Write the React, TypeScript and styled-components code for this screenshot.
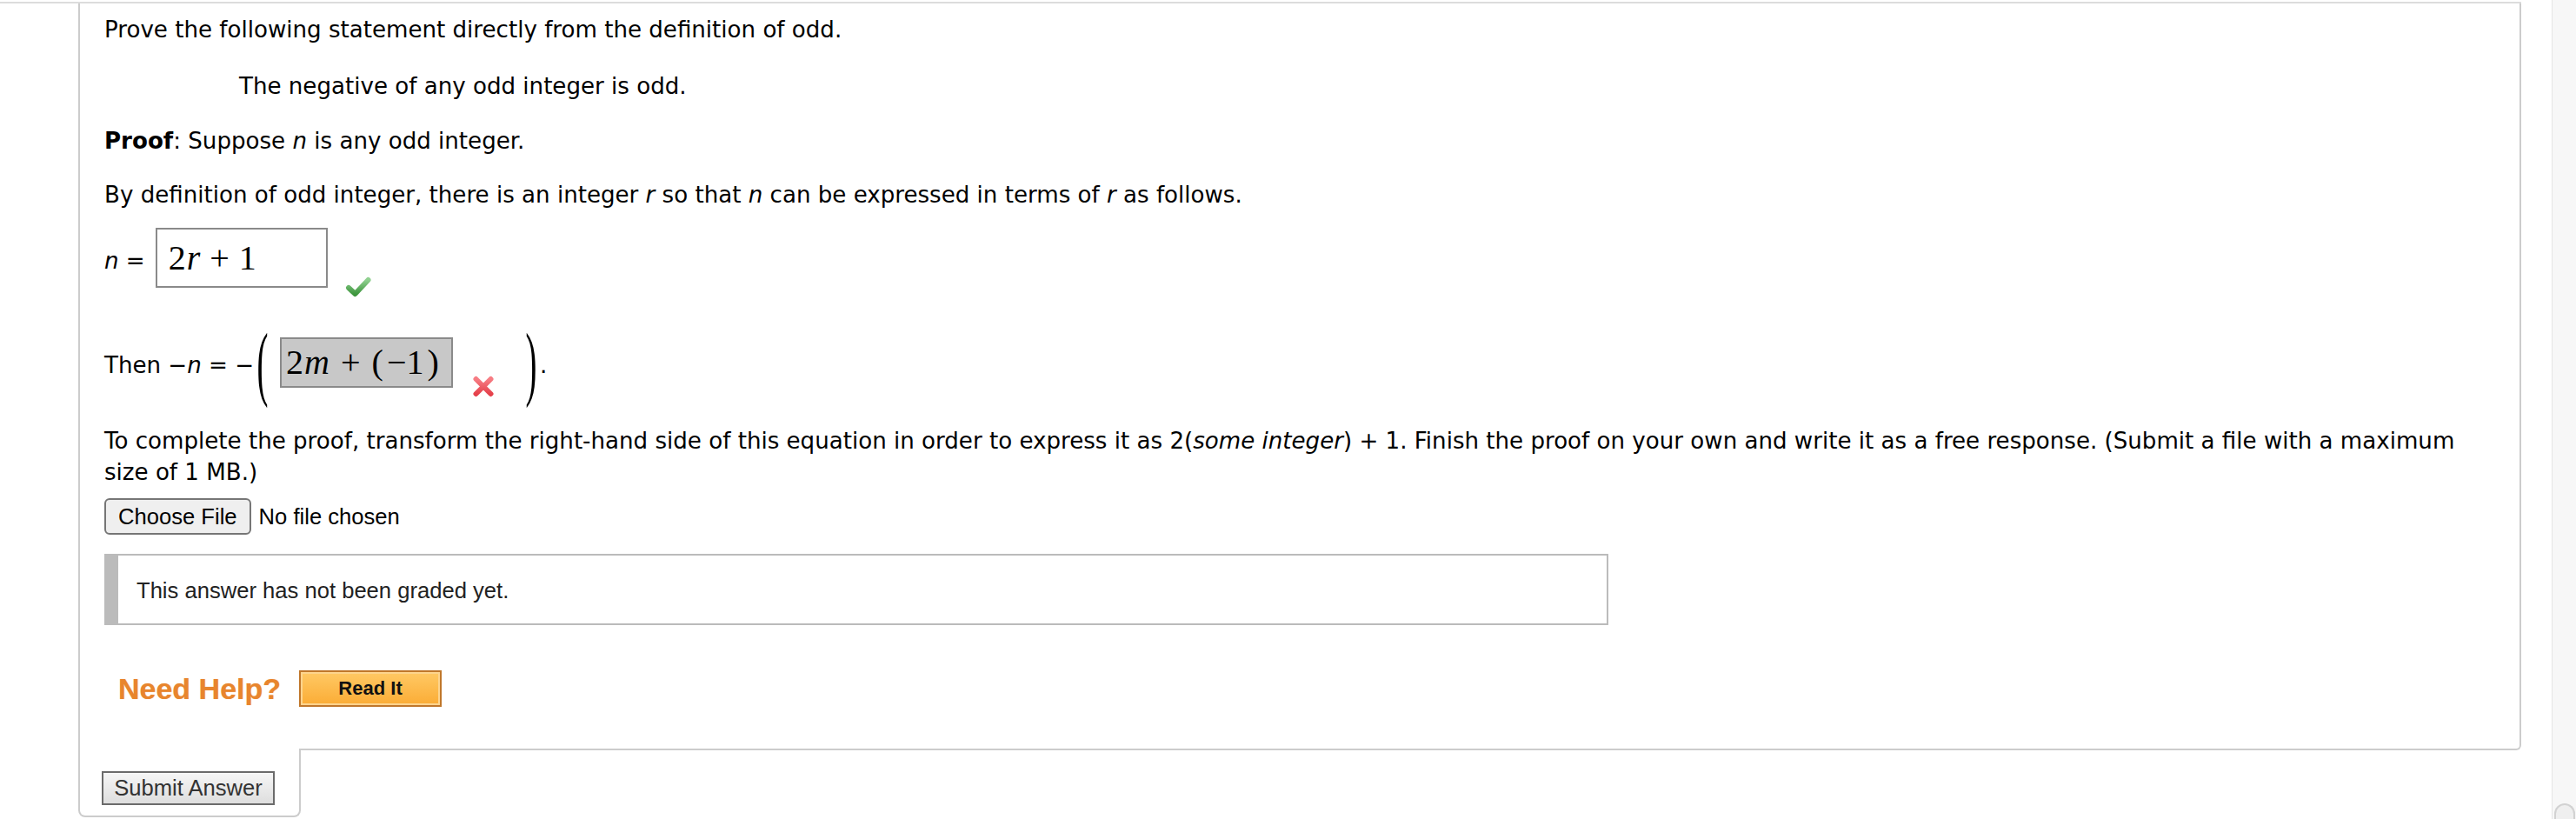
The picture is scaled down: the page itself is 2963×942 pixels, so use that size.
import React from 'react';
import styled, { createGlobalStyle } from 'styled-components';

const GlobalStyle = createGlobalStyle`
  html, body {
    margin: 0;
    padding: 0;
    background: #ffffff;
    overflow: hidden;
  }
  body {
    font-family: "DejaVu Sans", Verdana, sans-serif;
    color: #000;
  }
`;

const Shell = styled.div`
  display: flex;
  width: 2963px;
  height: 942px;
  overflow: hidden;
`;

const Stage = styled.div`
  display: flex;
  align-items: flex-start;
  width: 2900px;
  margin-top: 2px;
  border-top: 2px solid #dcdcdc;
  align-self: flex-start;
`;

const Gutter = styled.div`
  width: 90px;
  flex-shrink: 0;
`;

const Column = styled.div`
  flex: 1;
  display: flex;
  flex-direction: column;
`;

const Card = styled.div`
  border-left: 2px solid #cccccc;
  border-right: 2px solid #cccccc;
  border-bottom: 2px solid #cccccc;
  border-bottom-right-radius: 6px;
  padding: 13px 28px 48px 28px;
  font-size: 26.1px;
`;

const Para = styled.p<{ $gap: number; $indent?: number; $lh?: number }>`
  margin: ${p => p.$gap}px 0 0 0;
  padding-left: ${p => p.$indent || 0}px;
  line-height: ${p => p.$lh || 34}px;
`;

const MathRow = styled.div<{ $gap: number; $height: number }>`
  display: flex;
  align-items: center;
  height: ${p => p.$height}px;
  margin-top: ${p => p.$gap}px;
  line-height: 34px;
`;

const Label = styled.span`
  white-space: pre;
  padding-top: 6px;
`;

const AnswerBox = styled.div<{ $graded?: boolean }>`
  display: flex;
  align-items: center;
  box-sizing: border-box;
  width: ${p => (p.$graded ? 199 : 198)}px;
  height: ${p => (p.$graded ? 58 : 69)}px;
  margin-left: ${p => (p.$graded ? 10 : 12)}px;
  padding-left: ${p => (p.$graded ? 5 : 13)}px;
  border: 2px solid #8a8a8a;
  background: ${p => (p.$graded ? '#c8c8c8' : '#ffffff')};
  font-family: "Liberation Serif", "Times New Roman", serif;
  font-size: 40px;
  line-height: 1;
  white-space: nowrap;
`;

const Var = styled.i`
  font-style: italic;
  margin-left: 1px;
`;

const Op = styled.span<{ $wide?: boolean }>`
  margin: 0 ${p => (p.$wide ? 13 : 11)}px;
`;

const Group = styled.span`
  margin: 0 4px;
`;

const Fence = styled.span<{ $gap?: number }>`
  display: inline-flex;
  align-items: center;
  justify-content: center;
  height: 76px;
  width: 20px;
  margin-left: ${p => p.$gap || 0}px;
  font-family: "Liberation Serif", "Times New Roman", serif;
  font-size: 54px;
  line-height: 1;
  transform: scale(0.72, 1.75);
`;

const Mark = styled.span<{ $drop: number; $gap: number }>`
  display: inline-flex;
  align-self: flex-end;
  margin-bottom: -${p => p.$drop}px;
  margin-left: ${p => p.$gap}px;
`;

const FileRow = styled.div`
  display: flex;
  align-items: center;
  margin-top: 12px;
  font-family: "Liberation Sans", Arial, sans-serif;
  font-size: 25.6px;
`;

const FileButton = styled.button`
  height: 42px;
  padding: 0 14px;
  border: 2px solid #767676;
  border-radius: 6px;
  background: #efefef;
  font-family: "Liberation Sans", Arial, sans-serif;
  font-size: 25.6px;
  color: #000;
`;

const FileName = styled.span`
  margin-left: 9px;
`;

const GradedNote = styled.div`
  box-sizing: border-box;
  width: 1730px;
  height: 82px;
  margin-top: 22px;
  padding: 25px 0 0 21px;
  border: 2px solid #bbbbbb;
  border-left: 16px solid #bbbbbb;
  font-family: "Liberation Sans", Arial, sans-serif;
  font-size: 25.6px;
  line-height: 30px;
  color: #222;
`;

const HelpRow = styled.div`
  display: flex;
  align-items: center;
  height: 42px;
  margin-top: 52px;
  padding-left: 16px;
`;

const HelpTitle = styled.span`
  font-family: "Liberation Sans", Arial, sans-serif;
  font-weight: bold;
  font-size: 34px;
  color: #e8852d;
  text-shadow: 0 0 1px rgba(232, 133, 45, 0.6);
`;

const ReadButton = styled.button`
  box-sizing: border-box;
  width: 164px;
  height: 42px;
  margin-left: 21px;
  border: 2px solid #c0772a;
  box-shadow: inset 0 0 0 2px #fdd48e;
  background: linear-gradient(#ffc965, #fbac35);
  font-family: "Liberation Sans", Arial, sans-serif;
  font-weight: bold;
  font-size: 22px;
  color: #111;
`;

const SubmitTab = styled.div`
  box-sizing: border-box;
  width: 256px;
  height: 79px;
  margin-top: -2px;
  padding: 26px 0 0 25px;
  border: 2px solid #cccccc;
  border-top: none;
  border-radius: 0 0 8px 8px;
  background: #ffffff;
`;

const SubmitButton = styled.button`
  box-sizing: border-box;
  width: 199px;
  height: 39px;
  padding: 0;
  border: 2px solid #6b6b6b;
  background: linear-gradient(#f6f6f6, #dedede);
  font-family: "Liberation Sans", Arial, sans-serif;
  font-size: 25.6px;
  color: #333;
`;

const Spacer = styled.div`
  width: 35px;
  flex-shrink: 0;
`;

const Scrollbar = styled.div`
  width: 27px;
  flex-shrink: 0;
  display: flex;
  flex-direction: column;
  justify-content: flex-end;
  border-left: 1px solid #e6e6e6;
  background: #f7f7f7;
`;

const Thumb = styled.div`
  width: 20px;
  height: 16px;
  margin: 0 auto;
  border: 2px solid #d2d2d2;
  border-bottom: none;
  border-radius: 12px 12px 0 0;
  background: #efefef;
`;

const CheckIcon = () => (
  <svg width="30" height="24" viewBox="0 0 30 24">
    <defs>
      <linearGradient id="chk" x1="0" y1="0" x2="0" y2="1">
        <stop offset="0" stopColor="#8fd08f" />
        <stop offset="1" stopColor="#3e963e" />
      </linearGradient>
    </defs>
    <path d="M4 13 L11.5 20 L26.5 4" fill="none" stroke="url(#chk)" strokeWidth="6" strokeLinecap="round" strokeLinejoin="round" />
  </svg>
);

const CrossIcon = () => (
  <svg width="26" height="25" viewBox="0 0 26 25">
    <defs>
      <linearGradient id="crs" x1="0" y1="0" x2="0" y2="1">
        <stop offset="0" stopColor="#f77d84" />
        <stop offset="1" stopColor="#e5414b" />
      </linearGradient>
    </defs>
    <path d="M4.5 4 L21.5 21 M21.5 4 L4.5 21" fill="none" stroke="url(#crs)" strokeWidth="6" strokeLinecap="round" />
  </svg>
);

const App: React.FC = () => {
  return (
    <Shell>
      <GlobalStyle />
      <Stage>
        <Gutter />
        <Column>
          <Card>
            <Para $gap={0}>Prove the following statement directly from the definition of odd.</Para>
            <Para $gap={31} $indent={155}>The negative of any odd integer is odd.</Para>
            <Para $gap={29}>
              <b>Proof</b>: Suppose <i>n</i> is any odd integer.
            </Para>
            <Para $gap={28}>
              By definition of odd integer, there is an integer <i>r</i> so that <i>n</i> can be expressed in terms
              of <i>r</i> as follows.
            </Para>

            <MathRow $gap={21} $height={69}>
              <Label>
                <i>n</i> =
              </Label>
              <AnswerBox>
                <span>2</span>
                <Var>r</Var>
                <Op>+</Op>
                <span>1</span>
              </AnswerBox>
              <Mark $drop={11} $gap={20}>
                <CheckIcon />
              </Mark>
            </MathRow>

            <MathRow $gap={48} $height={76}>
              <Label>
                Then −<i>n</i> = −
              </Label>
              <Fence>(</Fence>
              <AnswerBox $graded>
                <span>2</span>
                <Var>m</Var>
                <Op $wide>+</Op>
                <span>(</span>
                <Group>−1</Group>
                <span>)</span>
              </AnswerBox>
              <Mark $drop={2} $gap={22}>
                <CrossIcon />
              </Mark>
              <Fence $gap={32}>)</Fence>
              <Label>.</Label>
            </MathRow>

            <Para $gap={34} $lh={36}>
              To complete the proof, transform the right-hand side of this equation in order to express it as 2(
              <i>some integer</i>) + 1. Finish the proof on your own and write it as a free response. (Submit a file
              with a maximum size of 1 MB.)
            </Para>

            <FileRow>
              <FileButton>Choose File</FileButton>
              <FileName>No file chosen</FileName>
            </FileRow>

            <GradedNote>This answer has not been graded yet.</GradedNote>

            <HelpRow>
              <HelpTitle>Need Help?</HelpTitle>
              <ReadButton>Read It</ReadButton>
            </HelpRow>
          </Card>
          <SubmitTab>
            <SubmitButton>Submit Answer</SubmitButton>
          </SubmitTab>
        </Column>
      </Stage>
      <Spacer />
      <Scrollbar>
        <Thumb />
      </Scrollbar>
    </Shell>
  );
};

export default App;
